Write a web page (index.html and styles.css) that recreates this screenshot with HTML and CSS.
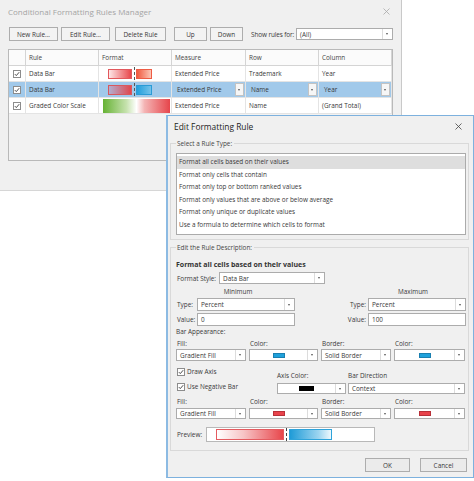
FILE: index.html
```html
<!DOCTYPE html>
<html lang="en">
<head>
    <meta charset="UTF-8">
    <title>Conditional Formatting Rules Manager</title>
    <link rel="stylesheet" href="styles.css">
</head>
<body>
    <div class="win mgr">
        <div class="titlebar">
            <span class="title">Conditional Formatting Rules Manager</span>
            <svg class="close" width="7" height="7" viewBox="0 0 7 7"><path d="M0.5 0.5 L6.5 6.5 M6.5 0.5 L0.5 6.5" stroke="#a8a8a8" stroke-width="0.8"/></svg>
        </div>
        <div class="toolbar">
            <button class="btn b-new">New Rule...</button>
            <button class="btn b-edit">Edit Rule...</button>
            <button class="btn b-del">Delete Rule</button>
            <button class="btn b-up">Up</button>
            <button class="btn b-down">Down</button>
            <span class="show-lbl">Show rules for:</span>
            <span class="combo show-combo"><span class="val">(All)</span><span class="arrow"></span></span>
        </div>
        <div class="rules">
            <div class="cell hd"></div>
            <div class="cell hd">Rule</div>
            <div class="cell hd">Format</div>
            <div class="cell hd">Measure</div>
            <div class="cell hd">Row</div>
            <div class="cell hd">Column</div>

            <div class="cell chk"><svg width="8" height="8" viewBox="0 0 8 8"><rect x="0.5" y="0.5" width="7" height="7" fill="#fff" stroke="#8c8c8c"/><path d="M1.8 4.1 L3.3 5.6 L6.2 2.2" fill="none" stroke="#3a3a3a" stroke-width="0.9"/></svg></div>
            <div class="cell">Data Bar</div>
            <div class="cell fmt"><span class="bar neg-red"></span><span class="axis"></span><span class="bar pos-red"></span></div>
            <div class="cell">Extended Price</div>
            <div class="cell">Trademark</div>
            <div class="cell">Year</div>

            <div class="cell chk sel"><svg width="8" height="8" viewBox="0 0 8 8"><rect x="0.5" y="0.5" width="7" height="7" fill="#fff" stroke="#8c8c8c"/><path d="M1.8 4.1 L3.3 5.6 L6.2 2.2" fill="none" stroke="#3a3a3a" stroke-width="0.9"/></svg></div>
            <div class="cell sel">Data Bar</div>
            <div class="cell fmt sel"><span class="bar neg-sel"></span><span class="axis"></span><span class="bar pos-blue"></span></div>
            <div class="cell sel edit"><span class="val">Extended Price</span><span class="drop"></span></div>
            <div class="cell sel edit"><span class="val">Name</span><span class="drop"></span></div>
            <div class="cell sel edit"><span class="val">Year</span><span class="drop"></span></div>

            <div class="cell chk"><svg width="8" height="8" viewBox="0 0 8 8"><rect x="0.5" y="0.5" width="7" height="7" fill="#fff" stroke="#8c8c8c"/><path d="M1.8 4.1 L3.3 5.6 L6.2 2.2" fill="none" stroke="#3a3a3a" stroke-width="0.9"/></svg></div>
            <div class="cell">Graded Color Scale</div>
            <div class="cell fmt"><span class="scale"></span></div>
            <div class="cell">Extended Price</div>
            <div class="cell">Name</div>
            <div class="cell">(Grand Total)</div>
        </div>
    </div>

    <div class="win efr">
        <div class="titlebar">
            <span class="title">Edit Formatting Rule</span>
            <svg class="close" width="7" height="7" viewBox="0 0 7 7"><path d="M0.5 0.5 L6.5 6.5 M6.5 0.5 L0.5 6.5" stroke="#444" stroke-width="0.8"/></svg>
        </div>

        <fieldset class="grp grp-type">
            <legend>Select a Rule Type:</legend>
            <ul class="typelist">
                <li class="on">Format all cells based on their values</li>
                <li>Format only cells that contain</li>
                <li>Format only top or bottom ranked values</li>
                <li>Format only values that are above or below average</li>
                <li>Format only unique or duplicate values</li>
                <li>Use a formula to determine which cells to format</li>
            </ul>
        </fieldset>

        <fieldset class="grp grp-desc">
            <legend>Edit the Rule Description:</legend>
            <div class="desc-head">Format all cells based on their values</div>

            <div class="style-row">
                <span class="lbl style-lbl">Format Style:</span>
                <span class="combo style-combo"><span class="val">Data Bar</span><span class="arrow"></span></span>
            </div>

            <div class="minmax">
                <span class="min-lbl">Minimum</span>
                <span class="max-lbl">Maximum</span>
            </div>

            <div class="pair-row">
                <div class="half">
                    <span class="lbl pl">Type:</span>
                    <span class="combo grow"><span class="val">Percent</span><span class="arrow"></span></span>
                </div>
                <div class="half right">
                    <span class="lbl pr">Type:</span>
                    <span class="combo grow"><span class="val">Percent</span><span class="arrow"></span></span>
                </div>
            </div>
            <div class="pair-row value-row">
                <div class="half">
                    <span class="lbl pl">Value:</span>
                    <span class="textbox grow">0</span>
                </div>
                <div class="half right">
                    <span class="lbl pr">Value:</span>
                    <span class="textbox grow">100</span>
                </div>
            </div>

            <div class="line">Bar Appearance:</div>

            <div class="quad labels">
                <span>Fill:</span><span>Color:</span><span>Border:</span><span>Color:</span>
            </div>
            <div class="quad combos">
                <span class="combo"><span class="val">Gradient Fill</span><span class="arrow"></span></span>
                <span class="combo"><span class="val swatch-box"><span class="swatch blue"></span></span><span class="arrow"></span></span>
                <span class="combo"><span class="val">Solid Border</span><span class="arrow"></span></span>
                <span class="combo"><span class="val swatch-box"><span class="swatch blue"></span></span><span class="arrow"></span></span>
            </div>

            <div class="axis-block">
                <div class="checks">
                    <div class="check-row"><svg width="8" height="8" viewBox="0 0 8 8"><rect x="0.5" y="0.5" width="7" height="7" fill="#fff" stroke="#8c8c8c"/><path d="M1.8 4.1 L3.3 5.6 L6.2 2.2" fill="none" stroke="#3a3a3a" stroke-width="0.9"/></svg><span>Draw Axis</span></div>
                    <div class="check-row"><svg width="8" height="8" viewBox="0 0 8 8"><rect x="0.5" y="0.5" width="7" height="7" fill="#fff" stroke="#8c8c8c"/><path d="M1.8 4.1 L3.3 5.6 L6.2 2.2" fill="none" stroke="#3a3a3a" stroke-width="0.9"/></svg><span>Use Negative Bar</span></div>
                </div>
                <div class="axis-col">
                    <div class="line">Axis Color:</div>
                    <span class="combo"><span class="val swatch-box"><span class="swatch black"></span></span><span class="arrow"></span></span>
                </div>
                <div class="dir-col">
                    <div class="line">Bar Direction</div>
                    <span class="combo"><span class="val">Context</span><span class="arrow"></span></span>
                </div>
            </div>

            <div class="quad labels neg-labels">
                <span>Fill:</span><span>Color:</span><span>Border:</span><span>Color:</span>
            </div>
            <div class="quad combos neg-combos">
                <span class="combo"><span class="val">Gradient Fill</span><span class="arrow"></span></span>
                <span class="combo"><span class="val swatch-box"><span class="swatch red"></span></span><span class="arrow"></span></span>
                <span class="combo"><span class="val">Solid Border</span><span class="arrow"></span></span>
                <span class="combo"><span class="val swatch-box"><span class="swatch red"></span></span><span class="arrow"></span></span>
            </div>

            <div class="preview-row">
                <span class="lbl prev-lbl">Preview:</span>
                <div class="preview">
                    <span class="pbar pneg"></span><span class="paxis"></span><span class="pbar ppos"></span>
                </div>
            </div>
        </fieldset>

        <div class="actions">
            <button class="btn ok">OK</button>
            <button class="btn cancel">Cancel</button>
        </div>
    </div>
</body>
</html>
```

FILE: styles.css
```css
html, body {
    margin: 0;
    padding: 0;
}
body {
    width: 474px;
    height: 481px;
    position: relative;
    overflow: hidden;
    background: #fff;
    font-family: "Open Sans", sans-serif;
    font-size: 6.4px;
    color: #383838;
}
.win {
    position: absolute;
    box-sizing: border-box;
    background: #f0f0f0;
}
.mgr {
    left: 0;
    top: 0;
    width: 402px;
    height: 191px;
    border-right: 1px solid #c9c9c9;
    border-bottom: 1px solid #d6d6d6;
}
.efr {
    left: 166px;
    top: 115px;
    width: 308px;
    height: 363px;
    border: 1px solid #7db1de;
    border-left: 2px solid #8dbbe3;
}
.titlebar {
    height: 22px;
    display: flex;
    align-items: center;
    justify-content: space-between;
    padding: 0 11px 0 8px;
}
.title {
    font-size: 8px;
    white-space: nowrap;
}
.mgr .title {
    color: #a4a4a4;
}
.efr .titlebar {
    height: 20px;
    padding: 0 11px 0 6px;
}
.efr .title {
    font-size: 8.4px;
    color: #222;
}

/* buttons */
.btn {
    box-sizing: border-box;
    height: 14px;
    padding: 0;
    margin: 0;
    border: 1px solid #adadad;
    background: #f3f3f3;
    font: inherit;
    color: #383838;
    white-space: nowrap;
}
.toolbar {
    display: flex;
    align-items: center;
    width: 393px;
    box-sizing: border-box;
    height: 14px;
    margin-top: 5px;
    padding-left: 9px;
}
.b-new { width: 49px; margin-right: 3px; }
.b-edit { width: 49px; margin-right: 5px; }
.b-del { width: 51px; margin-right: 8px; }
.b-up { width: 33px; margin-right: 3px; }
.b-down { width: 33px; margin-right: 8px; }
.show-lbl {
    flex: none;
    margin-right: 2px;
    white-space: nowrap;
    letter-spacing: -0.1px;
}
.show-combo {
    flex: 1;
    height: 14px;
}

/* combo boxes */
.combo, .textbox {
    box-sizing: border-box;
    display: flex;
    align-items: center;
    height: 12px;
    border: 1px solid #acacac;
    background: #fff;
    color: #383838;
}
.combo .val {
    flex: 1;
    padding-left: 3px;
    white-space: nowrap;
    overflow: hidden;
}
.textbox {
    padding-left: 3px;
}
.arrow {
    position: relative;
    width: 9px;
    height: 100%;
    border-left: 1px solid #dcdcdc;
}
.arrow::after {
    content: "";
    position: absolute;
    left: 3px;
    top: 50%;
    margin-top: -1px;
    border-left: 1.5px solid transparent;
    border-right: 1.5px solid transparent;
    border-top: 2px solid #555;
}

/* rules grid */
.rules {
    box-sizing: border-box;
    width: 385px;
    height: 112px;
    margin: 8px 0 0 8px;
    border: 1px solid #b9b9b9;
    background: #f2f2f2;
    display: grid;
    grid-template-columns: 17px 73px 73px 74px 73px 73px;
    grid-template-rows: repeat(4, 16px);
    align-content: start;
}
.cell {
    box-sizing: border-box;
    display: flex;
    align-items: center;
    padding-left: 3px;
    background: #fff;
    border-right: 1px solid #e4e4e4;
    border-bottom: 1px solid #e4e4e4;
    white-space: nowrap;
    overflow: hidden;
}
.cell.hd {
    background: #fbfbfb;
    border-right-color: #d4d4d4;
    border-bottom-color: #d4d4d4;
    color: #444;
}
.cell.chk {
    padding-left: 4px;
}
.cell.sel {
    background: #a1c9ea;
}
.cell.edit {
    padding-left: 5px;
    padding-right: 1px;
}
.cell.edit .val {
    flex: 1;
}
.drop {
    position: relative;
    box-sizing: border-box;
    width: 9px;
    height: 13px;
    background: #f6f6f6;
    border: 1px solid #c3c3c3;
}
.drop::after {
    content: "";
    position: absolute;
    left: 2px;
    top: 5px;
    border-left: 1.5px solid transparent;
    border-right: 1.5px solid transparent;
    border-top: 2px solid #555;
}
.fmt {
    padding-left: 9px;
}
.bar {
    box-sizing: border-box;
    height: 10px;
}
.neg-red {
    width: 24px;
    border: 1px solid #e2585c;
    background: linear-gradient(to right, #fde6e6, #e8474c);
}
.neg-sel {
    width: 24px;
    border: 1px solid #d8585e;
    background: linear-gradient(to right, #b2aed0, #e0474c);
}
.axis {
    width: 0;
    height: 13px;
    margin: 0 1.5px;
    border-left: 1px dashed #555;
}
.pos-red {
    width: 16px;
    border: 1px solid #ee5c44;
    background: linear-gradient(to right, #f1593e, #fbc6b6);
}
.pos-blue {
    width: 16px;
    border: 1px solid #2a9bd6;
    background: linear-gradient(to right, #239fdc, #74c2ea);
}
.fmt .scale {
    width: 67px;
    height: 14px;
    margin-left: -5px;
    background: linear-gradient(to right, #66b234, #c6e2ae 35%, #fff 50%, #f4b4b4 62%, #e6454b);
}

/* edit formatting rule */
.grp {
    margin: 3px 4px 0 2px;
    padding: 5px 2px 4px 5px;
    border: 1px solid #d9d9d9;
    min-width: 0;
}
.grp legend {
    padding: 0 2px 0 1px;
    line-height: 9px;
    color: #444;
}
.typelist {
    box-sizing: border-box;
    height: 82px;
    margin: 0;
    padding: 2px 0 3px;
    list-style: none;
    border: 1px solid #ababab;
    background: #fff;
}
.typelist li {
    height: 12.5px;
    line-height: 12.5px;
    padding-left: 2px;
    white-space: nowrap;
}
.typelist li.on {
    background: #dedede;
}
.grp-desc {
    padding: 0 2px 8px 5px;
}
.desc-head {
    margin-top: 8px;
    line-height: 10px;
    font-size: 7px;
    font-weight: bold;
    color: #333;
}
.lbl {
    white-space: nowrap;
}
.style-row {
    display: flex;
    align-items: center;
    margin-top: 2px;
}
.style-lbl {
    width: 42px;
    padding-left: 1px;
}
.style-combo {
    width: 106px;
}
.minmax {
    display: flex;
    justify-content: space-between;
    margin-top: 3px;
    line-height: 10px;
}
.min-lbl {
    width: 124px;
    text-align: center;
}
.max-lbl {
    width: 106px;
    text-align: center;
}
.pair-row {
    display: flex;
    justify-content: space-between;
    margin-top: 1px;
}
.pair-row .combo, .pair-row .textbox {
    height: 13px;
}
.value-row {
    margin-top: 2px;
}
.half {
    display: flex;
    align-items: center;
    width: 119px;
}
.half.right {
    width: 120px;
}
.grow {
    flex: 1;
}
.pl {
    width: 20px;
    padding-left: 1px;
}
.pr {
    width: 20px;
    padding-right: 2px;
    text-align: right;
}
.line {
    line-height: 10px;
    white-space: nowrap;
}
.value-row + .line {
    margin-top: 1px;
}
.quad {
    display: grid;
    grid-template-columns: 70px 69px 70px 71px;
    column-gap: 3px;
}
.quad.labels {
    margin-top: 2px;
    line-height: 10px;
}
.quad.labels span {
    padding-left: 1px;
}
.quad.combos .combo {
    height: 12px;
}
.swatch-box {
    display: flex;
    justify-content: center;
    padding-left: 0 !important;
}
.swatch {
    box-sizing: border-box;
    width: 12px;
    height: 5px;
}
.swatch.blue {
    background: #1fa1db;
    border: 1px solid #1a7fb0;
}
.swatch.red {
    background: #e8434b;
    border: 1px solid #b83038;
}
.swatch.black {
    width: 15px;
    background: #000;
}
.axis-block {
    display: flex;
    height: 32px;
    margin-top: 3px;
}
.checks {
    width: 101px;
}
.check-row {
    display: flex;
    align-items: center;
    height: 15px;
    padding-left: 1px;
}
.check-row span {
    margin-left: 2px;
}
.axis-col {
    width: 69px;
    margin-right: 2px;
}
.dir-col {
    width: 117px;
}
.axis-col .line, .dir-col .line {
    margin-top: 7px;
}
.axis-col .combo, .dir-col .combo {
    height: 11px;
    margin-top: 2px;
}
.neg-labels {
    margin-top: 1px !important;
}
.neg-combos {
    margin-top: 1px;
}
.neg-combos .combo {
    height: 11px !important;
}
.preview-row {
    display: flex;
    align-items: center;
    margin-top: 8px;
}
.prev-lbl {
    width: 29px;
    padding-left: 1px;
}
.preview {
    box-sizing: border-box;
    display: flex;
    align-items: center;
    width: 169px;
    height: 15px;
    padding-left: 9px;
    border: 1px solid #b8b8b8;
    background: #fff;
}
.pbar {
    box-sizing: border-box;
    height: 11px;
}
.pneg {
    width: 68px;
    border: 1px solid #e45b60;
    background: linear-gradient(to right, #fff, #f7c4c6 40%, #e8474c);
}
.paxis {
    width: 0;
    height: 13px;
    margin: 0 2px;
    border-left: 1px dashed #444;
}
.ppos {
    width: 43px;
    border: 1px solid #2ea3da;
    background: linear-gradient(to right, #1f9bd7, #9dd5f0 70%, #eef8fd);
}
.actions {
    display: flex;
    justify-content: flex-end;
    margin-top: 7px;
    padding-right: 6px;
}
.actions .btn {
    background: #ebebeb;
}
.ok {
    width: 45px;
    margin-right: 10px;
}
.cancel {
    width: 47px;
}
```
